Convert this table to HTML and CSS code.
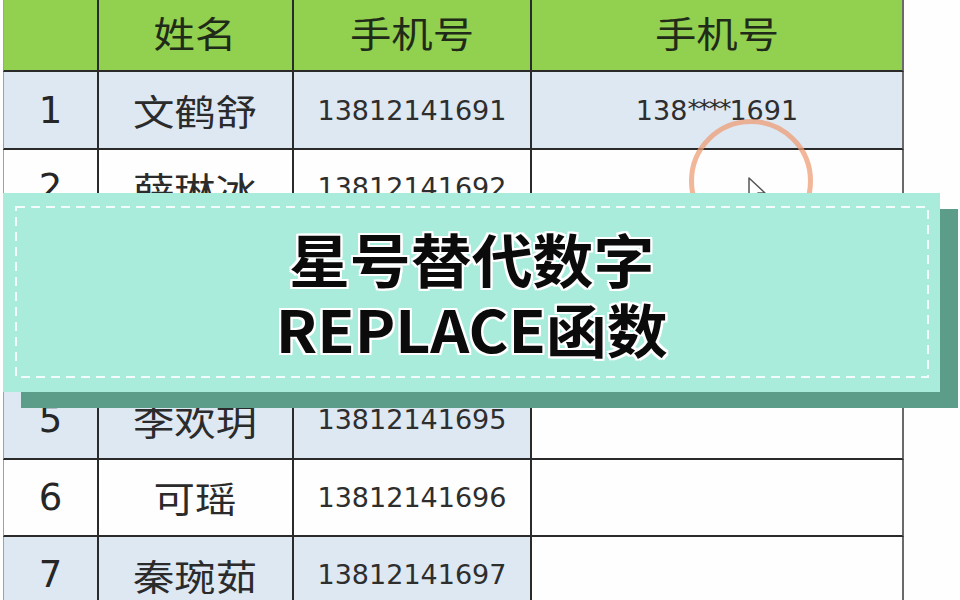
FILE: index.html
```html
<!DOCTYPE html>
<html lang="zh-CN">
<head>
<meta charset="utf-8">
<title>星号替代数字 REPLACE函数</title>
<link rel="stylesheet" href="styles.css">
</head>
<body>
<div class="sheet">
  <div class="grid">
    <div class="cell hd idx"></div>
    <div class="cell hd"><span class="t">姓名</span></div>
    <div class="cell hd"><span class="t">手机号</span></div>
    <div class="cell hd last"><span class="t">手机号</span></div>

    <div class="cell odd idx"><span class="t num">1</span></div>
    <div class="cell odd"><span class="t">文鹤舒</span></div>
    <div class="cell odd"><span class="t phone">13812141691</span></div>
    <div class="cell odd last"><span class="t phone">138<span class="star">****</span>1691</span></div>

    <div class="cell idx"><span class="t num">2</span></div>
    <div class="cell"><span class="t">薛琳冰</span></div>
    <div class="cell"><span class="t phone">13812141692</span></div>
    <div class="cell last"></div>

    <div class="cell odd idx"></div>
    <div class="cell odd"></div>
    <div class="cell odd"></div>
    <div class="cell last"></div>

    <div class="cell idx"></div>
    <div class="cell"></div>
    <div class="cell"></div>
    <div class="cell last"></div>

    <div class="cell odd idx"><span class="t num">5</span></div>
    <div class="cell odd"><span class="t">李欢玥</span></div>
    <div class="cell odd"><span class="t phone">13812141695</span></div>
    <div class="cell last"></div>

    <div class="cell idx"><span class="t num">6</span></div>
    <div class="cell"><span class="t">可瑶</span></div>
    <div class="cell"><span class="t phone">13812141696</span></div>
    <div class="cell last"></div>

    <div class="cell odd idx"><span class="t num">7</span></div>
    <div class="cell odd"><span class="t">秦琬茹</span></div>
    <div class="cell odd"><span class="t phone">13812141697</span></div>
    <div class="cell last"></div>
  </div>

  <div class="ring"></div>
  <svg class="cursor" width="24" height="30" viewBox="0 0 24 30">
    <path d="M2 2 L2 24 L7 19 L11 28 L15 26 L11 17 L18 17 Z" fill="#fff" stroke="#555" stroke-width="1.5" stroke-linejoin="round"/>
  </svg>

  <div class="banner">
    <svg class="dash" width="937" height="199" viewBox="0 0 937 199">
      <rect x="13" y="14" width="912" height="170" fill="none" stroke="#ffffff" stroke-opacity="0.85" stroke-width="2" stroke-dasharray="9 6"/>
    </svg>
    <div class="title">星号替代数字<br>REPLACE函数</div>
  </div>
</div>
</body>
</html>
```
FILE: styles.css
```css
* { box-sizing: border-box; }
html, body { margin: 0; padding: 0; }
body {
  width: 960px;
  height: 600px;
  overflow: hidden;
  background: #fdfefd;
  font-family: "Noto Sans CJK SC", "Noto Sans", sans-serif;
}
.sheet {
  position: relative;
  width: 960px;
  height: 600px;
  overflow: hidden;
}
.grid {
  margin-left: 3px;
  width: 901px;
  display: grid;
  grid-template-columns: 96px 195px 238px 372px;
  grid-template-rows: 72px 78px repeat(6, 77.4px);
}
.cell {
  display: flex;
  align-items: center;
  justify-content: center;
  border-right: 2px solid #2a2a2a;
  border-bottom: 2px solid #2a2a2a;
  background: #fdfefd;
  color: #2b2b2b;
  font-size: 36px;
  overflow: hidden;
}
.cell.idx { border-left: 1px solid #a0a0a0; }
.cell.last { border-right: 2px solid #6a6a6a; }
.cell.hd {
  background: #92d050;
  color: #1f2b18;
  font-size: 36px;
  padding-bottom: 6px;
}
.cell.odd { background: #dde8f3; }
.t {
  display: inline-block;
  transform: scaleX(1.15);
  white-space: nowrap;
}
.num {
  font-family: "DejaVu Sans", sans-serif;
  font-size: 37px;
  transform: none;
  color: #262626;
}
.phone {
  font-family: "DejaVu Sans", sans-serif;
  font-size: 27px;
  transform: none;
  color: #2e2e2e;
}
.star {
  font-size: 25px;
  vertical-align: 3px;
  letter-spacing: -2px;
}
.ring {
  position: absolute;
  left: 689px;
  top: 119px;
  width: 124px;
  height: 124px;
  border-radius: 50%;
  border: 5px solid rgba(238, 158, 118, 0.75);
}
.cursor {
  position: absolute;
  left: 747px;
  top: 176px;
}
.banner {
  position: absolute;
  left: 3px;
  top: 193px;
  width: 937px;
  height: 199px;
  background: #a9ecdc;
  box-shadow: 18px 16px 0 #5b9d88;
  display: flex;
  flex-direction: column;
  align-items: center;
  justify-content: center;
}
.dash {
  position: absolute;
  left: 0;
  top: 0;
}
.title {
  position: relative;
  text-align: center;
  font-family: "Noto Sans CJK SC", sans-serif;
  font-weight: 700;
  font-size: 58px;
  line-height: 70px;
  color: #0b0b0b;
  transform: scaleX(1.05);
  text-shadow:
    2px 0 0 #fff, -2px 0 0 #fff, 0 2px 0 #fff, 0 -2px 0 #fff,
    2px 2px 0 #fff, -2px -2px 0 #fff, 2px -2px 0 #fff, -2px 2px 0 #fff;
}
```
